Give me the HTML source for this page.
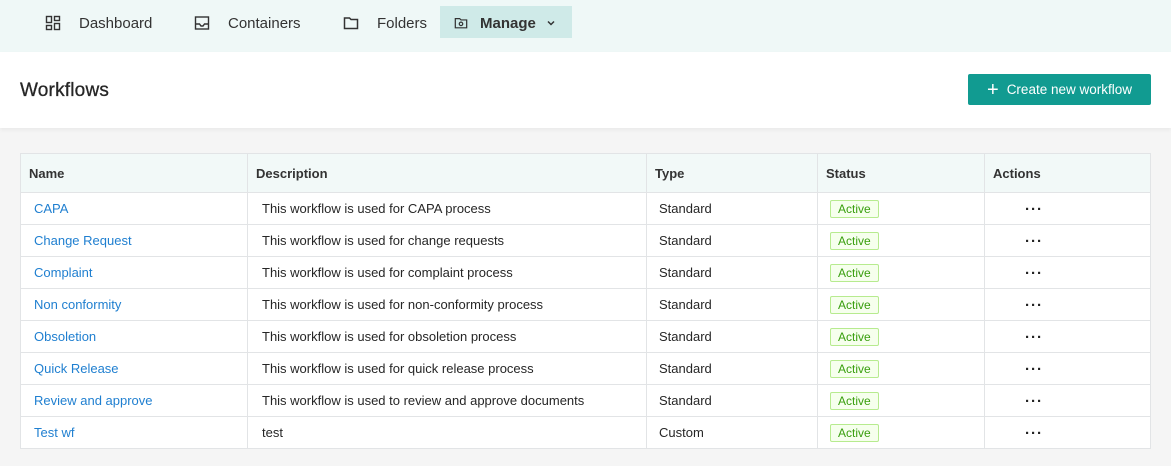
<!DOCTYPE html>
<html><head><style>
*{box-sizing:border-box;margin:0;padding:0}
body{width:1171px;height:466px;background:#f5f5f5;font-family:"Liberation Sans",sans-serif;color:#262626;overflow:hidden;position:relative}
.nav{position:absolute;left:0;top:0;width:1171px;height:52px;background:#eff8f7;box-shadow:0 2px 6px rgba(0,0,0,.06)}
.ni{position:absolute;top:7px;height:32px;display:flex;align-items:center;font-size:15px;color:#333}
.ni svg{margin-right:18px}
.mg{top:6px;background:#cfeae8;padding:2px 16px 0 14px;font-weight:bold;color:#333}
.hdr{position:absolute;left:0;top:52px;width:1171px;height:76px;background:#fff;box-shadow:0 2px 4px rgba(0,0,0,.05)}
.hdr h1{position:absolute;left:20px;top:28px;font-size:19px;font-weight:normal;color:#262626;letter-spacing:.2px;-webkit-text-stroke:.3px #262626}
.btn{position:absolute;left:968px;top:22px;width:183px;height:31px;background:#119b91;color:#fff;font-size:13.5px;display:flex;align-items:center;justify-content:center;border-radius:2px}
table{position:absolute;left:20px;top:153px;width:1131px;border-collapse:collapse;background:#fff;font-size:13px}
td,th{border:1px solid #e2e4e6;height:32px;padding:0 0 0 14px;text-align:left;font-weight:normal}
th{background:#f2f9f8;height:39px;font-weight:bold;color:#333;padding-left:8px;font-size:13px}
td.n{color:#1f7fd0;padding-left:13px}
td.s{padding-left:12px}
.b{display:inline-block;border:1px solid #b7eb8f;background:#f6ffed;color:#389e0d;font-size:12px;padding:1px 7px;border-radius:2px}
td.a{padding-left:40px;letter-spacing:1px;font-weight:bold;font-size:15px;color:#222;padding-top:2px}
</style></head><body>
<div class="nav">
<div class="ni" style="left:45px"><svg width="16" height="16" viewBox="0 0 16 16" fill="none" stroke="#333" stroke-width="1.4"><rect x="1.5" y="1.5" width="5" height="6"/><rect x="1.5" y="10.5" width="5" height="4"/><rect x="9.5" y="1.5" width="5" height="4"/><rect x="9.5" y="8.5" width="5" height="6"/></svg>Dashboard</div>
<div class="ni" style="left:194px"><svg width="16" height="16" viewBox="0 0 16 16" fill="none" stroke="#333" stroke-width="1.4"><rect x="1.5" y="2" width="13" height="12"/><path d="M1.5 9h4l1.5 2h2l1.5-2h4"/></svg>Containers</div>
<div class="ni" style="left:343px"><svg width="16" height="16" viewBox="0 0 16 16" fill="none" stroke="#333" stroke-width="1.5"><path d="M1.5 3h5l1.5 1.5h6.5v9h-13z"/></svg>Folders</div>
<div class="ni mg" style="left:440px;width:132px"><svg width="14" height="14" viewBox="0 0 16 16" fill="none" stroke="#333" stroke-width="1.4" style="margin-right:12px"><path d="M1.5 3h5l1.5 1.5h6.5v9h-13z"/><circle cx="8" cy="9" r="2"/></svg>Manage<svg width="10" height="10" viewBox="0 0 10 10" style="margin-left:10px;margin-right:0" fill="none" stroke="#333" stroke-width="1.5"><path d="M2 3.5l3 3 3-3"/></svg></div>
</div>
<div class="hdr"><h1>Workflows</h1><div class="btn"><span style="font-size:20px;font-weight:lighter;margin-right:8px;line-height:1">+</span>Create new workflow</div></div>
<table>
<tr><th style="width:227px">Name</th><th style="width:399px">Description</th><th style="width:171px">Type</th><th style="width:167px">Status</th><th>Actions</th></tr>
<tr><td class="n">CAPA</td><td>This workflow is used for CAPA process</td><td class="s">Standard</td><td class="s"><span class="b">Active</span></td><td class="a">···</td></tr>
<tr><td class="n">Change Request</td><td>This workflow is used for change requests</td><td class="s">Standard</td><td class="s"><span class="b">Active</span></td><td class="a">···</td></tr>
<tr><td class="n">Complaint</td><td>This workflow is used for complaint process</td><td class="s">Standard</td><td class="s"><span class="b">Active</span></td><td class="a">···</td></tr>
<tr><td class="n">Non conformity</td><td>This workflow is used for non-conformity process</td><td class="s">Standard</td><td class="s"><span class="b">Active</span></td><td class="a">···</td></tr>
<tr><td class="n">Obsoletion</td><td>This workflow is used for obsoletion process</td><td class="s">Standard</td><td class="s"><span class="b">Active</span></td><td class="a">···</td></tr>
<tr><td class="n">Quick Release</td><td>This workflow is used for quick release process</td><td class="s">Standard</td><td class="s"><span class="b">Active</span></td><td class="a">···</td></tr>
<tr><td class="n">Review and approve</td><td>This workflow is used to review and approve documents</td><td class="s">Standard</td><td class="s"><span class="b">Active</span></td><td class="a">···</td></tr>
<tr><td class="n">Test wf</td><td>test</td><td class="s">Custom</td><td class="s"><span class="b">Active</span></td><td class="a">···</td></tr>
</table>
</body></html>
